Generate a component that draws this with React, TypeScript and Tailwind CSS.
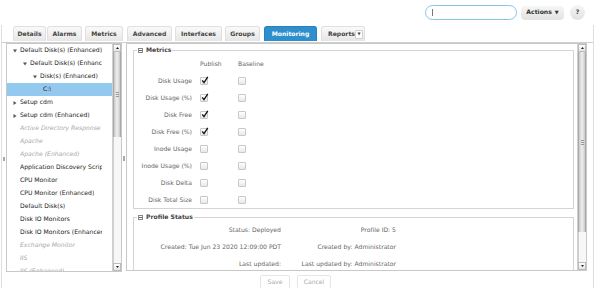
import clsx from "clsx";

type TreeNode = {
  label: string;
  pl: string;
  arrow?: "down" | "right";
  off?: boolean;
  selected?: boolean;
};

const tree: TreeNode[] = [
  { label: "Default Disk(s) (Enhanced)", pl: "pl-[6px]", arrow: "down" },
  { label: "Default Disk(s) (Enhanced)", pl: "pl-[16px]", arrow: "down" },
  { label: "Disk(s) (Enhanced)", pl: "pl-[26px]", arrow: "down" },
  { label: "C:\\", pl: "pl-[36px]", selected: true },
  { label: "Setup cdm", pl: "pl-[6px]", arrow: "right" },
  { label: "Setup cdm (Enhanced)", pl: "pl-[6px]", arrow: "right" },
  { label: "Active Directory Response", pl: "pl-[13px]", off: true },
  { label: "Apache", pl: "pl-[13px]", off: true },
  { label: "Apache (Enhanced)", pl: "pl-[13px]", off: true },
  { label: "Application Discovery Script", pl: "pl-[13px]" },
  { label: "CPU Monitor", pl: "pl-[13px]" },
  { label: "CPU Monitor (Enhanced)", pl: "pl-[13px]" },
  { label: "Default Disk(s)", pl: "pl-[13px]" },
  { label: "Disk IO Monitors", pl: "pl-[13px]" },
  { label: "Disk IO Monitors (Enhanced)", pl: "pl-[13px]" },
  { label: "Exchange Monitor", pl: "pl-[13px]", off: true },
  { label: "IIS", pl: "pl-[13px]", off: true },
  { label: "IIS (Enhanced)", pl: "pl-[13px]", off: true },
];

const tabs = [
  { label: "Details", cls: "w-[33px]" },
  { label: "Alarms", cls: "ml-[1px] w-[35px]" },
  { label: "Metrics", cls: "ml-[3px] w-[38px]" },
  { label: "Advanced", cls: "ml-[4px] w-[45px]" },
  { label: "Interfaces", cls: "ml-[3px] w-[47px]" },
  { label: "Groups", cls: "ml-[3px] w-[35px]" },
];

const metrics: [string, boolean][] = [
  ["Disk Usage", true],
  ["Disk Usage (%)", true],
  ["Disk Free", true],
  ["Disk Free (%)", true],
  ["Inode Usage", false],
  ["Inode Usage (%)", false],
  ["Disk Delta", false],
  ["Disk Total Size", false],
];

const profile = [
  ["Status: Deployed", "Profile ID: 5"],
  ["Created: Tue Jun 23 2020 12:09:00 PDT", "Created by: Administrator"],
  ["Last updated:", "Last updated by: Administrator"],
];

function Arrow({ dir }: { dir: "down" | "right" }) {
  return (
    <svg width="4" height="4" viewBox="0 0 4 4" className="mr-[3px] shrink-0">
      {dir === "down" ? (
        <path d="M0 0.5 L4 0.5 L2 3.5 Z" fill="#555" />
      ) : (
        <path d="M0.5 0 L3.5 2 L0.5 4 Z" fill="#555" />
      )}
    </svg>
  );
}

function Checkbox({ checked }: { checked: boolean }) {
  return (
    <div className="relative h-[8px] w-[8px] rounded-[1px] border border-[#c8c8c8] bg-gradient-to-b from-white to-[#e8e8e8]">
      {checked && (
        <svg width="8" height="8" viewBox="0 0 8 8" className="absolute -top-[2px] left-[0px]">
          <path d="M1.2 4.4 L3 6.6 L6.8 0.8" stroke="#111" strokeWidth="1.3" fill="none" />
        </svg>
      )}
    </div>
  );
}

function BoxMinus() {
  return (
    <div className="mr-[3px] flex h-[5px] w-[5px] items-center justify-center border border-[#888]">
      <div className="h-px w-[3px] bg-[#666]" />
    </div>
  );
}

function ScrollButton({ up }: { up?: boolean }) {
  return (
    <div className="flex h-[8px] w-full shrink-0 items-center justify-center border border-[#bcbcbc] bg-gradient-to-b from-white to-[#e4e4e4]">
      <svg width="3" height="2" viewBox="0 0 3 2">
        <path d={up ? "M0 2 L3 2 L1.5 0 Z" : "M0 0 L3 0 L1.5 2 Z"} fill="#222" />
      </svg>
    </div>
  );
}

function Grip() {
  return (
    <div className="flex flex-col gap-px">
      <div className="h-px w-[3px] bg-[#999]" />
      <div className="h-px w-[3px] bg-[#999]" />
      <div className="h-px w-[3px] bg-[#999]" />
    </div>
  );
}

export default function App() {
  return (
    <div className="relative h-[288px] w-[600px] overflow-hidden bg-white font-['DejaVu_Sans',sans-serif] text-[6.1px] leading-none text-[#333]">
      {/* top bar */}
      <div className="flex h-[25px] items-center justify-end pr-[15px]">
        <div className="flex h-[15px] w-[92px] items-center rounded-full border-[1.5px] border-[#86c5e8] pl-[6px]">
          <div className="h-[7px] w-px bg-[#777]" />
        </div>
        <div className="ml-[4px] flex h-[14px] w-[43px] items-center justify-center rounded-[4px] bg-gradient-to-b from-[#f6f6f6] to-[#e2e2e2] font-bold text-[#333]">
          Actions <span className="ml-[3px] text-[5px]">▼</span>
        </div>
        <div className="ml-[6px] flex h-[15px] w-[15px] items-center justify-center rounded-full bg-gradient-to-b from-[#f6f6f6] to-[#e2e2e2] font-bold text-[#333]">
          ?
        </div>
      </div>

      <div className="ml-[1px] flex h-[263px] w-[593px] flex-col border-x border-[#dedede]">
        {/* tabs */}
        <div className="flex h-[18px] shrink-0 items-end border-b border-[#cfcfcf] pb-[1px] pl-[11px]">
          {tabs.map((t) => (
            <div
              key={t.label}
              className={clsx(
                "flex h-[15px] items-center justify-center rounded-t-[3px] border border-b-0 border-[#e0e0e0] bg-gradient-to-b from-[#fafafa] to-[#e6e6e6] font-bold text-[#444]",
                t.cls
              )}
            >
              {t.label}
            </div>
          ))}
          <div className="ml-[4px] flex h-[15px] w-[53px] items-center justify-center rounded-t-[3px] border border-b-0 border-[#2582bd] bg-[#2e8fcc] font-bold text-white">
            Monitoring
          </div>
          <div className="ml-[4px] flex h-[15px] w-[44px] items-center rounded-t-[3px] border border-b-0 border-[#e0e0e0] bg-gradient-to-b from-[#fafafa] to-[#e6e6e6] pl-[6px] font-bold text-[#444]">
            Reports
            <div className="ml-auto mr-[1px] flex h-[9px] w-[8px] items-center justify-center rounded-[1px] border border-[#d0d0d0] bg-white text-[4px]">
              ▼
            </div>
          </div>
        </div>

        {/* body */}
        <div className="flex h-[229px] shrink-0">
          <div className="flex w-[4px] items-center justify-center pt-[2px]">
            <div className="h-[4px] w-[2px] bg-[#aaa]" />
          </div>

          {/* tree */}
          <div className="flex w-[116px] border border-[#c8c8c8]">
            <div className="flex min-w-0 flex-1 flex-col overflow-hidden">
              {tree.map((n, i) => (
                <div
                  key={i}
                  className={clsx(
                    "flex h-[13px] shrink-0 items-center whitespace-nowrap pr-[10px]",
                    n.pl,
                    n.selected && "bg-[#93c9ef]"
                  )}
                >
                  {n.arrow && <Arrow dir={n.arrow} />}
                  <span
                    className={clsx(
                      "min-w-0 overflow-hidden",
                      n.off ? "italic text-[#a8a8a8]" : "text-[#222]"
                    )}
                  >
                    {n.label}
                  </span>
                </div>
              ))}
            </div>
            <div className="flex w-[9px] shrink-0 flex-col border-l border-[#d0d0d0] bg-[#f7f7f7]">
              <ScrollButton up />
              <div className="flex h-[85px] items-center justify-center border-x border-[#a9a9a9] bg-gradient-to-r from-[#c9c9c9] via-[#f0f0f0] to-[#c9c9c9]">
                <Grip />
              </div>
              <div className="flex-1 border-l border-[#cfcfcf]" />
              <ScrollButton />
            </div>
          </div>

          {/* splitter */}
          <div className="flex w-[4px] items-center justify-center pt-[2px]">
            <div className="h-[5px] w-[2px] bg-[#aaa]" />
          </div>

          {/* right panel */}
          <div className="flex h-[228px] w-[461px] border border-[#c8c8c8]">
            <div className="min-w-0 flex-1 overflow-hidden pl-[6px] pr-[3px] pt-[6px]">
              <div className="flex h-[159px] flex-col border border-[#d4d4d4]">
                <div className="-mt-[5px] ml-[3px] flex h-[9px] w-fit items-center bg-white px-[1px] font-bold text-[#444]">
                  <BoxMinus />
                  Metrics
                </div>
                <div className="flex h-[18px] items-center pl-[66px] text-[#666]">
                  <span className="w-[38px]">Publish</span>
                  <span>Baseline</span>
                </div>
                {metrics.map(([label, on]) => (
                  <div key={label} className="flex h-[16.9px] items-center text-[#666]">
                    <span className="w-[58px] text-right">{label}</span>
                    <div className="ml-[8px]">
                      <Checkbox checked={on} />
                    </div>
                    <div className="ml-[30px]">
                      <Checkbox checked={false} />
                    </div>
                  </div>
                ))}
              </div>

              <div className="mt-[8px] flex h-[80px] flex-col border border-[#d4d4d4]">
                <div className="-mt-[5px] ml-[3px] flex h-[9px] w-fit items-center bg-white px-[1px] font-bold text-[#444]">
                  <BoxMinus />
                  Profile Status
                </div>
                {profile.map(([a, b]) => (
                  <div key={a} className="flex h-[17px] shrink-0 items-center text-[#666]">
                    <span className="w-[147px] text-right">{a}</span>
                    <span className="w-[115px] text-right">{b}</span>
                  </div>
                ))}
              </div>
            </div>
            <div className="flex w-[9px] shrink-0 flex-col border-l border-[#d0d0d0] bg-[#f7f7f7]">
              <ScrollButton up />
              <div className="flex h-[180px] items-center justify-center border-x border-[#a9a9a9] bg-gradient-to-r from-[#c9c9c9] via-[#f0f0f0] to-[#c9c9c9]">
                <Grip />
              </div>
              <div className="flex-1 border-l border-[#cfcfcf]" />
              <ScrollButton />
            </div>
          </div>
        </div>

        {/* footer */}
        <div className="flex flex-1 items-start pl-[258px] pt-[3px] text-[#aaa]">
          <div className="flex h-[14px] w-[30px] items-center justify-center rounded-[2px] border border-[#e6e6e6]">
            Save
          </div>
          <div className="ml-[7px] flex h-[14px] w-[34px] items-center justify-center rounded-[2px] border border-[#e6e6e6]">
            Cancel
          </div>
        </div>
      </div>
    </div>
  );
}
